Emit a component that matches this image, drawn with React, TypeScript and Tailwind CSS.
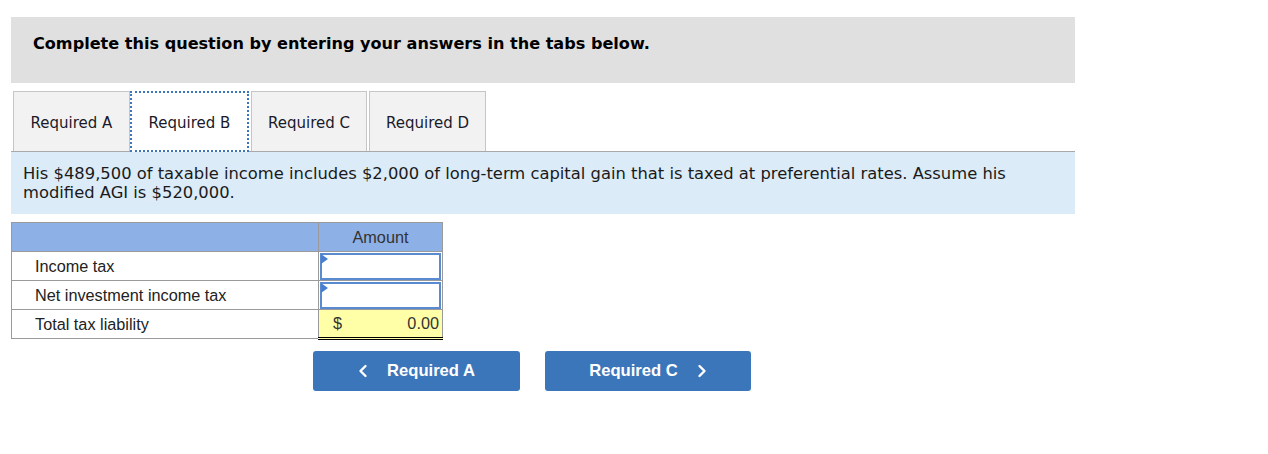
import React from "react";

const Chevron = ({ dir }: { dir: "left" | "right" }) => (
  <svg width="10" height="14" viewBox="0 0 10 14" className="shrink-0">
    {dir === "left" ? (
      <path d="M7.5 2 L2.5 7 L7.5 12" fill="none" stroke="white" strokeWidth="2.4" strokeLinecap="round" strokeLinejoin="round" />
    ) : (
      <path d="M2.5 2 L7.5 7 L2.5 12" fill="none" stroke="white" strokeWidth="2.4" strokeLinecap="round" strokeLinejoin="round" />
    )}
  </svg>
);

const InputCell = () => (
  <td className="border border-[#9a9a9a] p-0 h-[29px] w-[124px]">
    <div className="relative mx-[1px] h-[27px] border-2 border-[#5a8ad0] bg-white">
      <div className="absolute left-[-1px] top-[-1px] w-0 h-0 border-t-[5px] border-b-[5px] border-l-[7px] border-t-transparent border-b-transparent border-l-[#4a7fd0]" />
    </div>
  </td>
);

export default function App() {
  return (
    <div className="w-[1268px] h-[454px] bg-white pt-[17px] pl-[11px]" style={{ fontFamily: '"DejaVu Sans", Verdana, sans-serif' }}>
      <div className="w-[1064px] h-[66px] bg-[#e0e0e0] pl-[22px] pt-[17px]">
        <p className="font-bold text-[16.1px] leading-[20px] text-black">Complete this question by entering your answers in the tabs below.</p>
      </div>

      <div className="mt-[9px] w-[1064px] flex items-end h-[60px] border-b border-[#a9a9a9] pl-[2px]">
        <div className="w-[117px] h-[60px] pt-[3px] bg-[#f2f2f2] border border-b-0 border-[#c6c6c6] flex items-center justify-center text-[15px] text-[#1a1a2a]">Required A</div>
        <div className="w-[119px] h-[61px] pt-[3px] -mb-px bg-white border-2 border-dotted border-[#3b76ba] flex items-center justify-center text-[15px] text-[#1a1a2a]">Required B</div>
        <div className="ml-[2px] w-[116px] h-[60px] pt-[3px] bg-[#f2f2f2] border border-b-0 border-[#c6c6c6] flex items-center justify-center text-[15px] text-[#1a1a2a]">Required C</div>
        <div className="ml-[2px] w-[117px] h-[60px] pt-[3px] bg-[#f2f2f2] border border-b-0 border-[#c6c6c6] flex items-center justify-center text-[15px] text-[#1a1a2a]">Required D</div>
      </div>

      <div className="w-[1064px] h-[62px] bg-[#dbebf8] pl-[12px] pt-[12px]">
        <p className="text-[16.35px] leading-[19px] text-[#1a1a1a] w-[1010px]">His $489,500 of taxable income includes $2,000 of long-term capital gain that is taxed at preferential rates. Assume his modified AGI is $520,000.</p>
      </div>

      <table className="mt-[8px] border-collapse border border-[#8c8c8c] text-[16.25px] text-[#222]" style={{ fontFamily: '"Liberation Sans", Arial, sans-serif' }}>
        <tbody>
          <tr className="bg-[#8db0e6] h-[29px]">
            <td className="w-[307px] border border-[#9a9a9a]"></td>
            <td className="w-[124px] border border-[#9a9a9a] text-center text-[#333]">Amount</td>
          </tr>
          <tr className="h-[29px]">
            <td className="border border-[#9a9a9a] pl-[23px]">Income tax</td>
            <InputCell />
          </tr>
          <tr className="h-[29px]">
            <td className="border border-[#9a9a9a] pl-[23px]">Net investment income tax</td>
            <InputCell />
          </tr>
          <tr className="h-[29px]">
            <td className="border border-[#9a9a9a] pl-[23px]">Total tax liability</td>
            <td className="border-x border-[#9a9a9a] border-b-[3px] border-b-black border-double bg-[#ffffa8] p-0">
              <div className="flex justify-between pl-[14px] pr-[3px] text-[#333]">
                <span>$</span>
                <span>0.00</span>
              </div>
            </td>
          </tr>
        </tbody>
      </table>

      <div className="mt-[11px] ml-[302px] flex gap-[25px]" style={{ fontFamily: '"Liberation Sans", Arial, sans-serif' }}>
        <button className="w-[207px] h-[40px] bg-[#3b76ba] rounded-[3px] text-white font-bold text-[16.6px] flex items-center justify-center gap-[19px]">
          <Chevron dir="left" />
          <span>Required A</span>
        </button>
        <button className="w-[206px] h-[40px] bg-[#3b76ba] rounded-[3px] text-white font-bold text-[16.6px] flex items-center justify-center gap-[19px]">
          <span>Required C</span>
          <Chevron dir="right" />
        </button>
      </div>
    </div>
  );
}
